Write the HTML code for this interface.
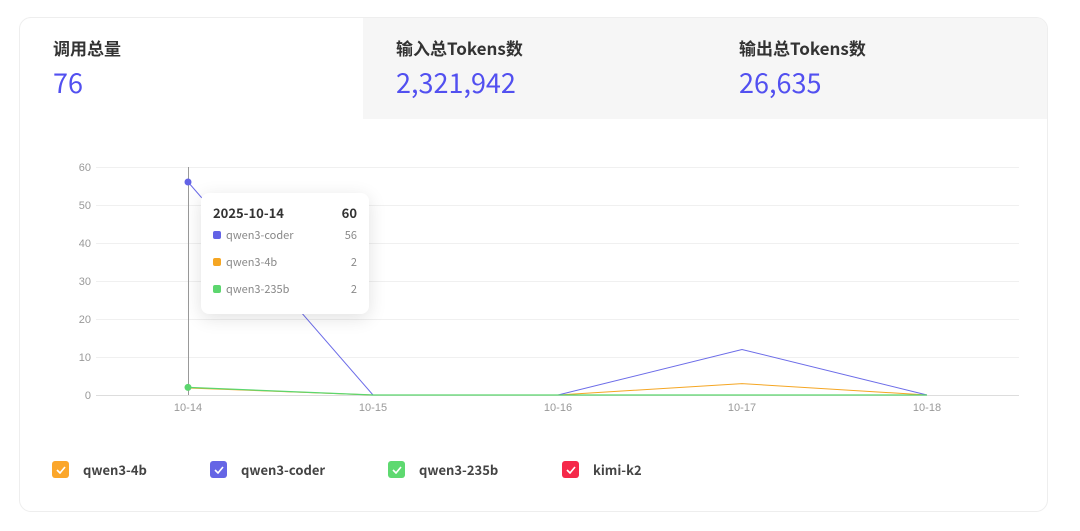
<!DOCTYPE html>
<html><head><meta charset="utf-8"><style>
*{margin:0;padding:0;box-sizing:border-box}
body{width:1080px;height:531px;background:#fff;font-family:"Liberation Sans","Noto Sans CJK SC",sans-serif;position:relative;overflow:hidden}
.card{position:absolute;left:19px;top:17px;width:1029px;height:495px;border:1px solid #eee;border-radius:12px;overflow:hidden;background:#fff}
.tab{position:absolute;top:0;height:101px;width:343px;padding:18px 0 0 33px}
.tab .t{font-size:17px;font-weight:bold;color:#333;font-family:"Noto Sans CJK SC",sans-serif;line-height:24px}
.tab .v{font-size:27px;color:#5250f0;margin-top:2px;font-family:"Noto Sans CJK SC",sans-serif;line-height:40px}
.g{background:#f6f6f6}
.leg{position:absolute;top:460px;display:flex;align-items:center;font-size:13px;font-weight:bold;color:#444;font-family:"Noto Sans CJK SC",sans-serif}
.cb{width:17px;height:17px;border-radius:3px;margin-right:14px;display:flex;align-items:center;justify-content:center}
.tip{position:absolute;left:201px;top:193px;width:168px;height:121px;background:#fff;border-radius:8px;box-shadow:0 4px 18px rgba(0,0,0,.12);padding:10px 12px;font-family:"Noto Sans CJK SC",sans-serif}
.tip .h{display:flex;justify-content:space-between;font-weight:bold;font-size:13px;color:#333;line-height:20px}
.tip .r{display:flex;justify-content:space-between;align-items:center;font-size:11px;color:#888;height:27px}
.tip .r span.d{display:inline-block;width:8px;height:8px;border-radius:2px;margin-right:5px}
</style></head><body>
<div class="card">
<div class="tab" style="left:0"><div class="t">调用总量</div><div class="v">76</div></div>
<div class="tab g" style="left:343px"><div class="t">输入总Tokens数</div><div class="v">2,321,942</div></div>
<div class="tab g" style="left:686px;width:343px"><div class="t">输出总Tokens数</div><div class="v">26,635</div></div>
</div>
<svg style="position:absolute;left:0;top:0" width="1080" height="531" font-family="Liberation Sans,sans-serif" font-size="11" fill="#999">
<g stroke="#f0f0f0" stroke-width="1">
<line x1="96" x2="1019" y1="167.5" y2="167.5"/><line x1="96" x2="1019" y1="205.5" y2="205.5"/><line x1="96" x2="1019" y1="243.5" y2="243.5"/><line x1="96" x2="1019" y1="281.5" y2="281.5"/><line x1="96" x2="1019" y1="319.5" y2="319.5"/><line x1="96" x2="1019" y1="357.5" y2="357.5"/>
</g>
<line x1="96" x2="1019" y1="395.5" y2="395.5" stroke="#ddd"/>
<g text-anchor="end"><text x="91" y="171">60</text><text x="91" y="209">50</text><text x="91" y="247">40</text><text x="91" y="285">30</text><text x="91" y="323">20</text><text x="91" y="361">10</text><text x="91" y="399">0</text></g>
<g text-anchor="middle"><text x="188" y="411">10-14</text><text x="373" y="411">10-15</text><text x="558" y="411">10-16</text><text x="742" y="411">10-17</text><text x="927" y="411">10-18</text></g>
<line x1="188.5" x2="188.5" y1="167" y2="395" stroke="#999"/>
<polyline fill="none" stroke="#f5a623" points="188,388 373,395 558,395 742,383.6 927,395"/>
<polyline fill="none" stroke="#6c6ce8" points="188,182 373,395 558,395 742,349.5 927,395"/>
<polyline fill="none" stroke="#5cd66e" stroke-width="1.3" points="188,387.4 373,395 558,395 742,395 927,395"/>
<circle cx="188" cy="182" r="3.5" fill="#6363e6"/><circle cx="188" cy="387.4" r="3.5" fill="#5cd66e"/>
</svg>
<div class="tip">
<div class="h"><span>2025-10-14</span><span>60</span></div>
<div class="r" style="margin-top:-2px"><span><span class="d" style="background:#6363e6"></span>qwen3-coder</span><span>56</span></div>
<div class="r"><span><span class="d" style="background:#f5a623"></span>qwen3-4b</span><span>2</span></div>
<div class="r"><span><span class="d" style="background:#5cd66e"></span>qwen3-235b</span><span>2</span></div>
</div>
<div class="leg" style="left:52px"><div class="cb" style="background:#fba62a"><svg width="10" height="8"><path d="M1 4l3 3 5-6" stroke="#fff" stroke-width="1.6" fill="none"/></svg></div>qwen3-4b</div>
<div class="leg" style="left:210px"><div class="cb" style="background:#6565e5"><svg width="10" height="8"><path d="M1 4l3 3 5-6" stroke="#fff" stroke-width="1.6" fill="none"/></svg></div>qwen3-coder</div>
<div class="leg" style="left:388px"><div class="cb" style="background:#5ed970"><svg width="10" height="8"><path d="M1 4l3 3 5-6" stroke="#fff" stroke-width="1.6" fill="none"/></svg></div>qwen3-235b</div>
<div class="leg" style="left:562px"><div class="cb" style="background:#f5294a"><svg width="10" height="8"><path d="M1 4l3 3 5-6" stroke="#fff" stroke-width="1.6" fill="none"/></svg></div>kimi-k2</div>
</body></html>
